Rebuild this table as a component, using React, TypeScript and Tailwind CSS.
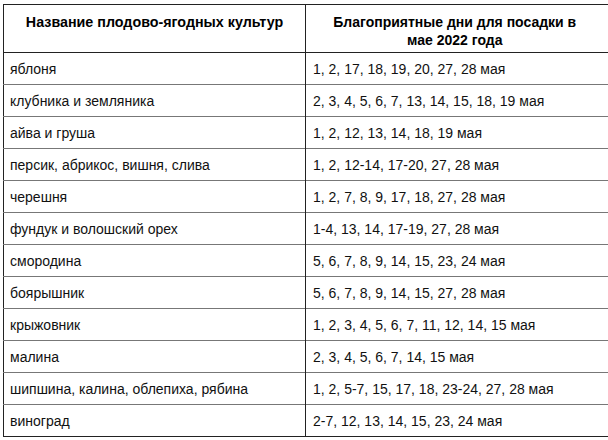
const rows: [string, string][] = [
  ["яблоня", "1, 2, 17, 18, 19, 20, 27, 28 мая"],
  ["клубника и земляника", "2, 3, 4, 5, 6, 7, 13, 14, 15, 18, 19 мая"],
  ["айва и груша", "1, 2, 12, 13, 14, 18, 19 мая"],
  ["персик, абрикос, вишня, слива", "1, 2, 12-14, 17-20, 27, 28 мая"],
  ["черешня", "1, 2, 7, 8, 9, 17, 18, 27, 28 мая"],
  ["фундук и волошский орех", "1-4, 13, 14, 17-19, 27, 28 мая"],
  ["смородина", "5, 6, 7, 8, 9, 14, 15, 23, 24 мая"],
  ["боярышник", "5, 6, 7, 8, 9, 14, 15, 27, 28 мая"],
  ["крыжовник", "1, 2, 3, 4, 5, 6, 7, 11, 12, 14, 15 мая"],
  ["малина", "2, 3, 4, 5, 6, 7, 14, 15 мая"],
  ["шипшина, калина, облепиха, рябина", "1, 2, 5-7, 15, 17, 18, 23-24, 27, 28 мая"],
  ["виноград", "2-7, 12, 13, 14, 15, 23, 24 мая"],
];

const App = () => {
  return (
    <div className="w-[608px] h-[440px] bg-white overflow-hidden pl-[3px] pt-[4px] font-['Liberation_Sans',Arial,sans-serif] text-[14px] text-[#111]">
      <table className="table-fixed border-collapse w-[604px]">
        <colgroup>
          <col className="w-[302px]" />
          <col className="w-[302px]" />
        </colgroup>
        <thead>
          <tr className="h-[48px]">
            <th className="border-l border-t border-b border-r border-[#222] align-top text-center font-bold leading-[18px] pt-[8px] px-2 text-black text-[14.3px]">
              Название плодово-ягодных культур
            </th>
            <th className="border-t border-b border-[#222] align-top text-center font-bold leading-[18px] pt-[8px] pl-2 pr-[12px] text-black">
              Благоприятные дни для посадки в
              <br />
              мае 2022 года
            </th>
          </tr>
        </thead>
        <tbody>
          {rows.map(([name, days], idx) => (
            <tr
              key={idx}
              className={
                "h-[32px] border-l border-l-[#222] " +
                (idx === rows.length - 1
                  ? "border-b border-b-[#222]"
                  : "border-b border-b-[#777]")
              }
            >
              <td className="border-r border-r-[#222] pl-[6px] align-middle leading-[16px]">
                {name}
              </td>
              <td className="pl-[7px] align-middle leading-[16px]">{days}</td>
            </tr>
          ))}
        </tbody>
      </table>
    </div>
  );
};

export default App;
